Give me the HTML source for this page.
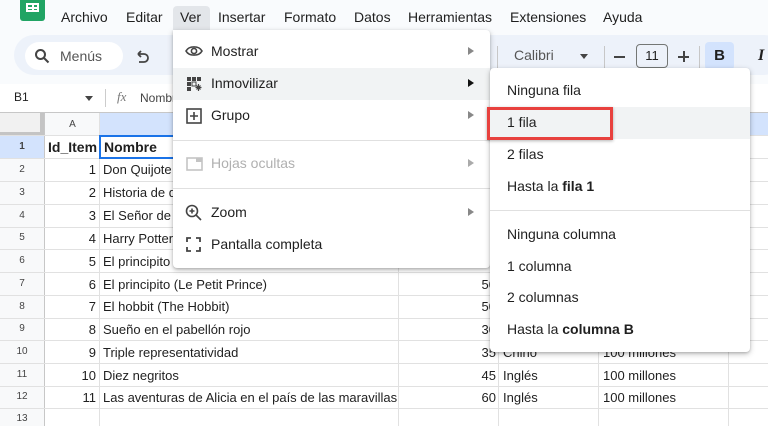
<!DOCTYPE html>
<html><head><meta charset="utf-8"><style>
*{margin:0;padding:0;box-sizing:border-box}
body{width:768px;height:426px;overflow:hidden;background:#fff;position:relative;font-family:"Liberation Sans",sans-serif;color:#1f1f1f}
.a{position:absolute;white-space:nowrap}
.top{position:absolute;left:0;top:0;width:768px;height:84px;background:#f9fbfd}
.menu{font-size:14px;top:9px;color:#1f1f1f}
.tb{position:absolute;left:14px;top:35px;width:770px;height:40px;background:#edf2fa;border-radius:20px}
.sheet{font-family:"Liberation Sans Narrow","Liberation Sans",sans-serif;font-size:13px}
.hl{position:absolute;left:0;width:768px;height:1px;background:#e1e1e1}
.vl{position:absolute;top:113px;width:1px;height:313px;background:#e1e1e1}
.rn{position:absolute;left:0;width:44px;text-align:center;font-size:10px;color:#444}
.dd{position:absolute;background:#fff;border-radius:4px;box-shadow:0 2px 6px rgba(0,0,0,.25),0 1px 2px rgba(0,0,0,.15)}
.mi{position:absolute;font-size:14px;color:#1f1f1f;white-space:nowrap}
.ar{position:absolute;width:0;height:0;border-top:4px solid transparent;border-bottom:4px solid transparent;border-left:6px solid #666}
</style></head><body>
<div class="top"></div>
<div class="a" style="left:20px;top:0;width:25px;height:21px;background:#21a464;border-radius:0 0 3px 3px"></div>
<div class="a" style="left:26px;top:3px;width:13px;height:9px;border:2px solid #fff;background:#21a464"></div>
<div class="a" style="left:32px;top:3px;width:2px;height:9px;background:#fff"></div>
<div class="a" style="left:26px;top:7px;width:13px;height:2px;background:#fff"></div>
<div class="a" style="left:173px;top:6px;width:37px;height:24px;background:#e3e6ea;border-radius:4px 4px 0 0"></div>
<div class="a menu" style="left:61px">Archivo</div>
<div class="a menu" style="left:126px">Editar</div>
<div class="a menu" style="left:180px">Ver</div>
<div class="a menu" style="left:218px">Insertar</div>
<div class="a menu" style="left:284px">Formato</div>
<div class="a menu" style="left:354px">Datos</div>
<div class="a menu" style="left:408px">Herramientas</div>
<div class="a menu" style="left:510px">Extensiones</div>
<div class="a menu" style="left:603px">Ayuda</div>
<div class="tb"></div>
<div class="a" style="left:25px;top:42px;width:98px;height:28px;background:#fff;border-radius:14px"></div>
<svg class="a" style="left:34px;top:48px" width="16" height="16" viewBox="0 0 16 16"><circle cx="6.5" cy="6.5" r="4.5" fill="none" stroke="#444" stroke-width="2"/><path d="M10 10l4.5 4.5" stroke="#444" stroke-width="2"/></svg>
<div class="a" style="left:60px;top:48px;font-size:14px;color:#555">Menús</div>
<svg class="a" style="left:134px;top:50px" width="16" height="14" viewBox="0 0 16 14"><path d="M4 4h6a4 4 0 010 8H5M4 4l3-3M4 4l3 3" fill="none" stroke="#444" stroke-width="1.8"/></svg>
<div class="a" style="left:497px;top:46px;width:1px;height:22px;background:#c7c7c7"></div>
<div class="a" style="left:514px;top:47px;font-size:14px;color:#555">Calibri</div>
<div class="ar" style="left:580px;top:54px;border:4px solid transparent;border-top:5px solid #444;border-bottom:0"></div>
<div class="a" style="left:604px;top:46px;width:1px;height:22px;background:#c7c7c7"></div>
<div class="a" style="left:614px;top:56px;width:11px;height:2px;background:#444"></div>
<div class="a" style="left:636px;top:44px;width:32px;height:24px;border:1px solid #747775;border-radius:4px;font-size:13px;text-align:center;line-height:22px">11</div>
<div class="a" style="left:678px;top:56px;width:11px;height:2px;background:#444"></div>
<div class="a" style="left:683px;top:51px;width:2px;height:11px;background:#444"></div>
<div class="a" style="left:699px;top:46px;width:1px;height:22px;background:#c7c7c7"></div>
<div class="a" style="left:705px;top:42px;width:29px;height:28px;background:#d3e3fd;border-radius:4px;font-weight:bold;font-size:15px;text-align:center;line-height:28px;color:#1f1f1f">B</div>
<div class="a" style="left:758px;top:47px;font-size:16px;font-style:italic;font-family:'Liberation Serif',serif;font-weight:bold">I</div>
<!-- formula bar -->
<div class="a" style="left:14px;top:90px;font-size:12px">B1</div>
<div class="ar" style="left:85px;top:96px;border:4px solid transparent;border-top:5px solid #444;border-bottom:0"></div>
<div class="a" style="left:105px;top:89px;width:1px;height:18px;background:#ccc"></div>
<div class="a" style="left:117px;top:89px;font-size:13px;font-style:italic;font-family:'Liberation Serif',serif;color:#777">fx</div>
<div class="a" style="left:140px;top:91px;font-size:12px;color:#444">Nombre</div>
<div class="hl" style="top:112px;background:#c7c7c7"></div>
<!-- headers -->
<div class="a" style="left:0;top:113px;width:44px;height:23px;background:#f1f1f1;border-right:4px solid #c4c4c4;border-bottom:4px solid #c4c4c4"></div>
<div class="a" style="left:45px;top:113px;width:55px;height:23px;background:#f8f9fa;text-align:center;font-size:10px;line-height:23px;color:#444">A</div>
<div class="a" style="left:100px;top:113px;width:668px;height:23px;background:#d3e3fd"></div>
<div class="a" style="left:0;top:136px;width:44px;height:23px;background:#d3e3fd"></div>
<div class="a" style="left:0;top:159px;width:44px;height:267px;background:#f8f9fa"></div>
<div class="vl" style="left:44px;background:#c7c7c7"></div>
<div class="vl" style="left:99px"></div><div class="vl" style="left:398px"></div><div class="vl" style="left:498px"></div><div class="vl" style="left:598px"></div><div class="vl" style="left:728px"></div>
<div class="hl" style="top:135px"></div>
<div class="hl" style="top:158px"></div><div class="hl" style="top:181px"></div><div class="hl" style="top:204px"></div><div class="hl" style="top:227px"></div><div class="hl" style="top:249px"></div><div class="hl" style="top:272px"></div><div class="hl" style="top:295px"></div><div class="hl" style="top:318px"></div><div class="hl" style="top:340px"></div><div class="hl" style="top:363px"></div><div class="hl" style="top:386px"></div><div class="hl" style="top:408px"></div>
<div class="a" style="left:99px;top:135px;width:300px;height:24px;border:2px solid #1a73e8"></div>
<div class="sheet">
<div class="rn" style="top:141px;font-weight:bold">1</div><div class="rn" style="top:164px">2</div><div class="rn" style="top:187px">3</div><div class="rn" style="top:210px">4</div><div class="rn" style="top:232px">5</div><div class="rn" style="top:255px">6</div><div class="rn" style="top:278px">7</div><div class="rn" style="top:301px">8</div><div class="rn" style="top:323px">9</div><div class="rn" style="top:346px">10</div><div class="rn" style="top:369px">11</div><div class="rn" style="top:391px">12</div><div class="rn" style="top:413px">13</div>
<div class="a" style="left:48px;top:139px;font-weight:bold;font-size:14px">Id_Item</div>
<div class="a" style="left:104px;top:139px;font-weight:bold;font-size:14px">Nombre</div>
<div class="a" style="left:60px;top:162px;width:36px;text-align:right">1</div><div class="a" style="left:103px;top:162px">Don Quijote</div>
<div class="a" style="left:60px;top:185px;width:36px;text-align:right">2</div><div class="a" style="left:103px;top:185px">Historia de dos ciudades</div>
<div class="a" style="left:60px;top:208px;width:36px;text-align:right">3</div><div class="a" style="left:103px;top:208px">El Señor de los Anillos</div>
<div class="a" style="left:60px;top:231px;width:36px;text-align:right">4</div><div class="a" style="left:103px;top:231px">Harry Potter</div>
<div class="a" style="left:60px;top:254px;width:36px;text-align:right">5</div><div class="a" style="left:103px;top:254px">El principito</div>
<div class="a" style="left:60px;top:277px;width:36px;text-align:right">6</div><div class="a" style="left:103px;top:277px">El principito (Le Petit Prince)</div><div class="a" style="left:470px;top:277px;width:26px;text-align:right">50</div>
<div class="a" style="left:60px;top:299px;width:36px;text-align:right">7</div><div class="a" style="left:103px;top:299px">El hobbit (The Hobbit)</div><div class="a" style="left:470px;top:299px;width:26px;text-align:right">50</div>
<div class="a" style="left:60px;top:322px;width:36px;text-align:right">8</div><div class="a" style="left:103px;top:322px">Sueño en el pabellón rojo</div><div class="a" style="left:470px;top:322px;width:26px;text-align:right">30</div>
<div class="a" style="left:60px;top:345px;width:36px;text-align:right">9</div><div class="a" style="left:103px;top:345px">Triple representatividad</div><div class="a" style="left:470px;top:345px;width:26px;text-align:right">35</div><div class="a" style="left:503px;top:345px">Chino</div><div class="a" style="left:603px;top:345px">100 millones</div>
<div class="a" style="left:60px;top:368px;width:36px;text-align:right">10</div><div class="a" style="left:103px;top:368px">Diez negritos</div><div class="a" style="left:470px;top:368px;width:26px;text-align:right">45</div><div class="a" style="left:503px;top:368px">Inglés</div><div class="a" style="left:603px;top:368px">100 millones</div>
<div class="a" style="left:60px;top:390px;width:36px;text-align:right">11</div><div class="a" style="left:103px;top:390px">Las aventuras de Alicia en el país de las maravillas</div><div class="a" style="left:470px;top:390px;width:26px;text-align:right">60</div><div class="a" style="left:503px;top:390px">Inglés</div><div class="a" style="left:603px;top:390px">100 millones</div>
</div>
<!-- menu -->
<div class="dd" style="left:173px;top:30px;width:317px;height:238px;border-radius:0 4px 4px 4px"></div>
<div class="a" style="left:173px;top:68px;width:317px;height:32px;background:#f1f3f4"></div>
<div class="a" style="left:173px;top:140px;width:317px;height:1px;background:#e0e0e0"></div>
<div class="a" style="left:173px;top:188px;width:317px;height:1px;background:#e0e0e0"></div>
<svg class="a" style="left:185px;top:44px" width="18" height="14" viewBox="0 0 18 14"><path d="M1 7C4 1.5 14 1.5 17 7C14 12.5 4 12.5 1 7Z" fill="none" stroke="#444" stroke-width="1.6"/><circle cx="9" cy="7" r="2.6" fill="none" stroke="#444" stroke-width="1.6"/></svg>
<svg class="a" style="left:186px;top:76px" width="16" height="16" viewBox="0 0 16 16" fill="#444"><rect x="1" y="1" width="4" height="4"/><rect x="6" y="1" width="4" height="4"/><rect x="11" y="1" width="4" height="4"/><rect x="1" y="6" width="4" height="4"/><rect x="1" y="11" width="4" height="4"/><rect x="6" y="6" width="4" height="4" fill="none" stroke="#444"/><path d="M12.5 8v7M9.5 11.5h6M10.5 9.5l4 4M14.5 9.5l-4 4" stroke="#444" stroke-width="1.2"/></svg>
<svg class="a" style="left:186px;top:108px" width="16" height="16" viewBox="0 0 16 16"><rect x="1" y="1" width="14" height="14" fill="none" stroke="#444" stroke-width="1.6"/><path d="M8 4v8M4 8h8" stroke="#444" stroke-width="1.6"/></svg>
<svg class="a" style="left:186px;top:157px" width="17" height="14" viewBox="0 0 17 14"><rect x="1" y="1" width="15" height="12" fill="none" stroke="#c4c4c4" stroke-width="1.6"/><rect x="10" y="1" width="6" height="4" fill="#c4c4c4"/></svg>
<svg class="a" style="left:185px;top:204px" width="17" height="17" viewBox="0 0 17 17"><circle cx="7" cy="7" r="5.5" fill="none" stroke="#444" stroke-width="1.6"/><path d="M11 11l5 5M7 4.5v5M4.5 7h5" stroke="#444" stroke-width="1.6"/></svg>
<svg class="a" style="left:186px;top:237px" width="15" height="15" viewBox="0 0 15 15"><path d="M1 5V1h4M10 1h4v4M14 10v4h-4M5 14H1v-4" fill="none" stroke="#444" stroke-width="1.8"/></svg>
<div class="mi" style="left:211px;top:43px">Mostrar</div>
<div class="mi" style="left:211px;top:75px">Inmovilizar</div>
<div class="mi" style="left:211px;top:107px">Grupo</div>
<div class="mi" style="left:211px;top:155px;color:#b0b0b0">Hojas ocultas</div>
<div class="mi" style="left:211px;top:204px">Zoom</div>
<div class="mi" style="left:211px;top:236px">Pantalla completa</div>
<div class="ar" style="left:468px;top:47px;border-left-color:#888"></div>
<div class="ar" style="left:468px;top:79px;border-left-color:#111"></div>
<div class="ar" style="left:468px;top:111px;border-left-color:#888"></div>
<div class="ar" style="left:468px;top:159px;border-left-color:#aaa"></div>
<div class="ar" style="left:468px;top:208px;border-left-color:#888"></div>
<!-- submenu -->
<div class="dd" style="left:490px;top:68px;width:260px;height:284px"></div>
<div class="a" style="left:490px;top:107px;width:260px;height:32px;background:#f1f3f4"></div>
<div class="a" style="left:490px;top:210px;width:260px;height:1px;background:#e0e0e0"></div>
<div class="mi" style="left:507px;top:82px">Ninguna fila</div>
<div class="mi" style="left:507px;top:114px">1 fila</div>
<div class="mi" style="left:507px;top:146px">2 filas</div>
<div class="mi" style="left:507px;top:178px">Hasta la <b>fila 1</b></div>
<div class="mi" style="left:507px;top:226px">Ninguna columna</div>
<div class="mi" style="left:507px;top:258px">1 columna</div>
<div class="mi" style="left:507px;top:289px">2 columnas</div>
<div class="mi" style="left:507px;top:321px">Hasta la <b>columna B</b></div>
<div class="a" style="left:487px;top:107px;width:126px;height:33px;border:3px solid #e8413e;box-shadow:0 1px 3px rgba(0,0,0,.3)"></div>
</body></html>
